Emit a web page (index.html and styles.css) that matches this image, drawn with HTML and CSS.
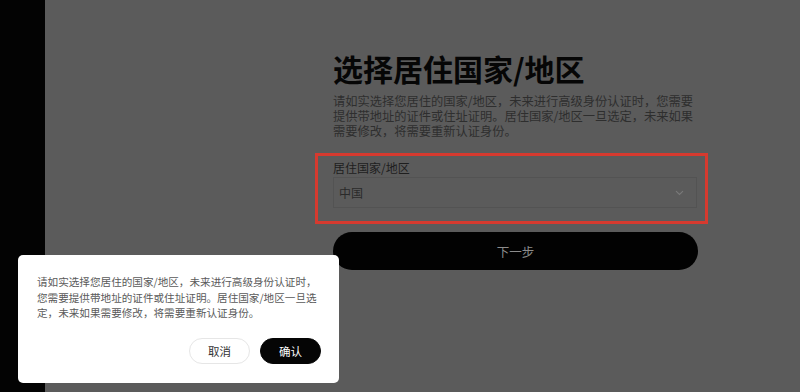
FILE: index.html
```html
<!DOCTYPE html>
<html lang="zh-CN">
<head>
  <meta charset="UTF-8">
  <meta name="viewport" content="width=device-width, initial-scale=1.0">
  <title>选择居住国家/地区</title>
  <link rel="stylesheet" href="styles.css">
</head>
<body>
  <div class="layout">
    <div class="sidebar"></div>
    <div class="main">
      <div class="content">
        <h1 class="heading">选择居住国家/地区</h1>
        <p class="paragraph">请如实选择您居住的国家/地区，未来进行高级身份认证时，您需要提供带地址的证件或住址证明。居住国家/地区一旦选定，未来如果需要修改，将需要重新认证身份。</p>

        <div class="field">
          <label class="field-label" for="country">居住国家/地区</label>
          <div class="select" id="country">
            <span>中国</span>
            <svg class="chevron" width="9" height="6" viewBox="0 0 9 6">
              <path d="M1 1.2 L4.5 4.5 L8 1.2" fill="none" stroke="#7a7a7a" stroke-width="1.1"/>
            </svg>
          </div>
        </div>

        <button class="button">下一步</button>
      </div>
    </div>
  </div>

  <div class="dialog">
    <p class="dialog-text">请如实选择您居住的国家/地区，未来进行高级身份认证时，您需要提供带地址的证件或住址证明。居住国家/地区一旦选定，未来如果需要修改，将需要重新认证身份。</p>
    <div class="dialog-actions">
      <button class="btn btn-cancel">取消</button>
      <button class="btn btn-ok">确认</button>
    </div>
  </div>
</body>
</html>
```

FILE: styles.css
```css
body {
  margin: 0;
  padding: 0;
  font-family: "Noto Sans CJK SC", "Noto Sans", sans-serif;
  background-color: #5b5b5b;
}
.layout {
  display: flex;
  height: 392px;
}
.sidebar {
  width: 45px;
  background-color: #030303;
}
.main {
  flex: 1;
  padding-left: 288px;
}
.content {
  width: 365px;
  padding-top: 50px;
}
.heading {
  margin: 0;
  font-size: 30px;
  line-height: 36px;
  font-weight: bold;
  color: #060606;
}
.paragraph {
  margin: 8px 0 0;
  font-size: 12.25px;
  line-height: 15px;
  color: #2e2e2e;
}
.field {
  position: relative;
  margin-top: 21px;
}
.field::after {
  content: "";
  position: absolute;
  top: -7px;
  bottom: -16px;
  left: -18px;
  right: -10px;
  border: 3px solid #d63a2f;
}
.field-label {
  display: block;
  font-size: 12px;
  line-height: 16px;
  color: #1e1e1e;
}
.select {
  display: flex;
  align-items: center;
  justify-content: space-between;
  height: 29px;
  margin-top: 1px;
  margin-right: 1px;
  padding: 0 12px 0 5px;
  border: 1px solid #535353;
  font-size: 12px;
  color: #2a2a2a;
}
.chevron {
  margin-top: 1px;
}
.button {
  display: block;
  width: 100%;
  height: 38px;
  margin-top: 24px;
  border: none;
  border-radius: 19px;
  background-color: #020202;
  color: #8c8c8c;
  font-family: inherit;
  font-size: 12.5px;
  cursor: pointer;
}

.dialog {
  position: absolute;
  left: 18px;
  top: 255px;
  width: 285px;
  padding: 19px 17px 19px 19px;
  background-color: white;
  border-radius: 5px;
}
.dialog-text {
  margin: 0;
  font-size: 10.6px;
  line-height: 15.5px;
  color: #5a5a5a;
}
.dialog-actions {
  display: flex;
  justify-content: flex-end;
  gap: 10px;
  margin-top: 17px;
  padding-right: 1px;
}
.btn {
  width: 61px;
  height: 26px;
  border-radius: 13px;
  font-family: inherit;
  font-size: 11.5px;
  cursor: pointer;
}
.btn-cancel {
  background-color: white;
  border: 1px solid #e6e6e6;
  color: #333;
}
.btn-ok {
  background-color: #050505;
  border: 1px solid #050505;
  color: white;
}
```
